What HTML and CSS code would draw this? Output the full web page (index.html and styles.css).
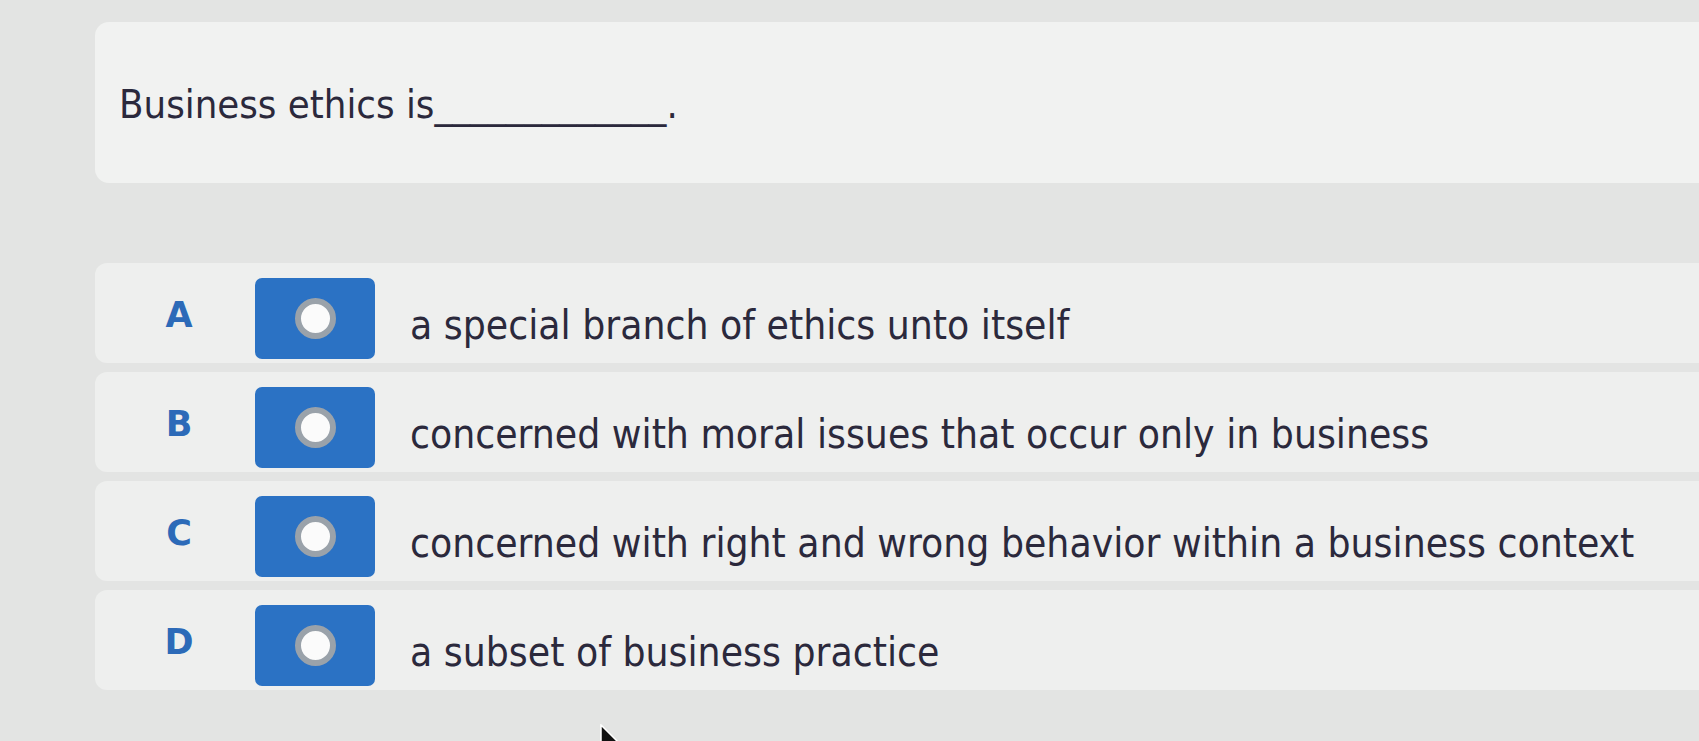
FILE: index.html
```html
<!DOCTYPE html>
<html lang="en">
<head>
<meta charset="utf-8">
<title>Business ethics question</title>
<link rel="stylesheet" href="styles.css">
</head>
<body>
<div class="page">
  <div class="question">
    <p class="qtext">Business ethics is_____________.</p>
  </div>
  <div class="options">
    <div class="option">
      <span class="label">A</span>
      <span class="btn"><span class="ring"></span></span>
      <span class="otext">a special branch of ethics unto itself</span>
    </div>
    <div class="option">
      <span class="label">B</span>
      <span class="btn"><span class="ring"></span></span>
      <span class="otext">concerned with moral issues that occur only in business</span>
    </div>
    <div class="option">
      <span class="label">C</span>
      <span class="btn"><span class="ring"></span></span>
      <span class="otext">concerned with right and wrong behavior within a business context</span>
    </div>
    <div class="option">
      <span class="label">D</span>
      <span class="btn"><span class="ring"></span></span>
      <span class="otext">a subset of business practice</span>
    </div>
  </div>
  <svg class="cursor" width="30" height="40" viewBox="0 0 30 40" aria-hidden="true">
    <path d="M1 1 L1 36 L9 28 L15 40 L21 37 L15 26 L26 26 Z" fill="#111" stroke="#fff" stroke-width="1.5"/>
  </svg>
</div>
</body>
</html>
```
FILE: styles.css
```css
html, body {
  margin: 0;
  padding: 0;
}
body {
  width: 1699px;
  height: 741px;
  overflow: hidden;
  background: #e3e4e3;
  font-family: "DejaVu Sans Condensed", "DejaVu Sans", Verdana, sans-serif;
  font-stretch: condensed;
  color: #2b293c;
}
.page {
  position: relative;
  height: 741px;
  padding: 22px 0 0 95px;
  box-sizing: border-box;
}
.question {
  height: 161px;
  box-sizing: border-box;
  background: #f1f2f1;
  border-radius: 14px 0 0 14px;
  padding: 58px 0 0 24px;
}
.qtext {
  margin: 0;
  font-size: 39.7px;
  line-height: 48px;
  white-space: nowrap;
}
.options {
  margin-top: 80px;
  display: flex;
  flex-direction: column;
  gap: 9px;
}
.option {
  height: 100px;
  background: #eeefee;
  border-radius: 12px 0 0 12px;
  display: flex;
  align-items: center;
}
.label {
  width: 152px;
  padding: 4px 0 0 8px;
  text-align: center;
  font-family: "DejaVu Sans", Verdana, sans-serif;
  font-stretch: normal;
  font-weight: bold;
  font-size: 35px;
  color: #2c6ab8;
}
.btn {
  width: 120px;
  height: 81px;
  margin-top: 10px;
  border-radius: 7px;
  background: #2b72c4;
  display: flex;
  align-items: center;
  justify-content: center;
  flex: none;
}
.ring {
  width: 29px;
  height: 29px;
  border: 6px solid #9aa2aa;
  border-radius: 50%;
  background: #fbfbfb;
}
.otext {
  margin-left: 35px;
  padding-top: 24px;
  font-size: 40.4px;
  line-height: 48px;
  white-space: nowrap;
}
.cursor {
  position: absolute;
  left: 600px;
  top: 724px;
}
```
